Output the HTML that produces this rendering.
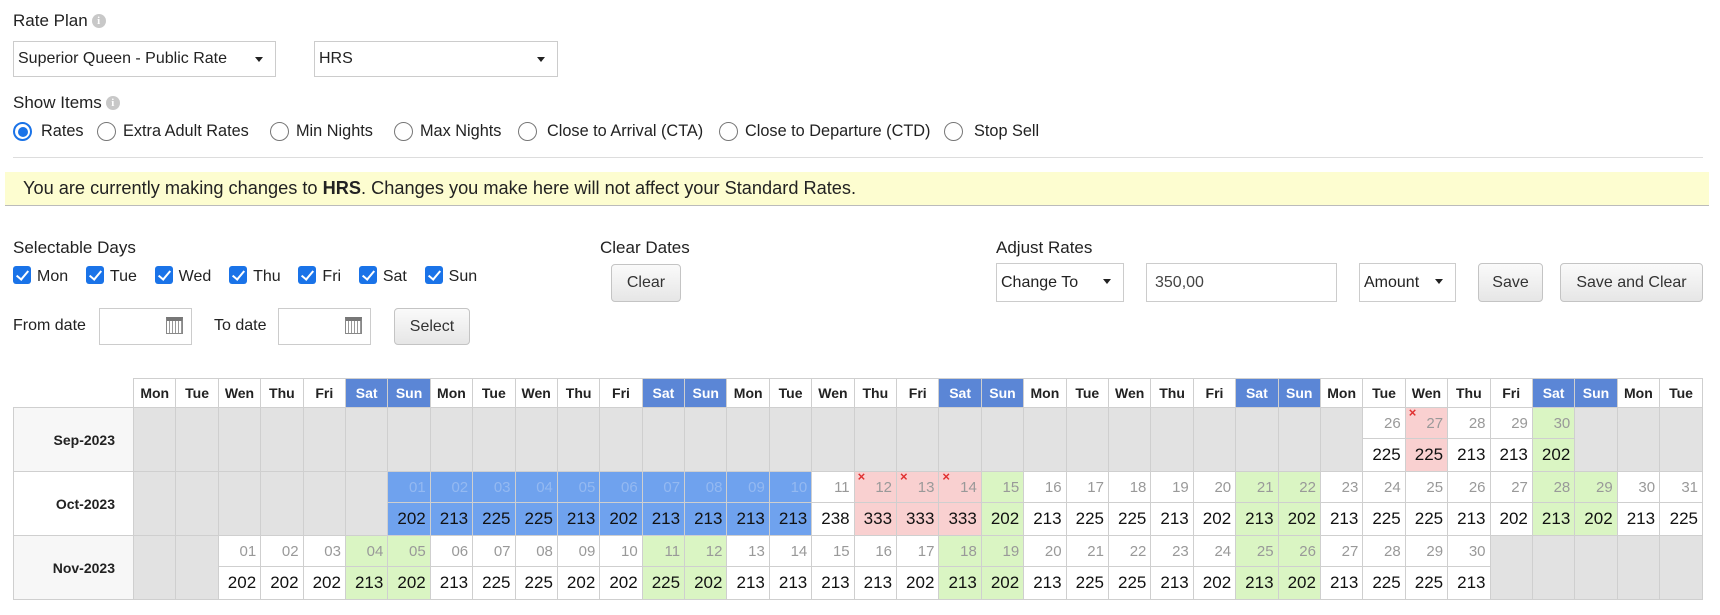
<!DOCTYPE html>
<html><head><meta charset="utf-8"><style>
*{box-sizing:border-box}
body{margin:0;width:1720px;height:615px;overflow:hidden;background:#fff;font-family:"Liberation Sans","DejaVu Sans",sans-serif;color:#222;font-size:17px;position:relative}
.a{position:absolute;white-space:nowrap}
.info{display:inline-block;width:14px;height:14px;border-radius:50%;background:#c8c8c8;color:#fff;font-size:11px;font-weight:bold;text-align:center;line-height:14px;font-family:"Liberation Serif",serif;vertical-align:2px;margin-left:4px}
.sel{position:absolute;border:1px solid #ccc;background:#fff;height:36px;line-height:34px;padding-left:4px;font-size:16px}
.sel:after{content:"";position:absolute;right:12px;top:15px;border-left:4px solid transparent;border-right:4px solid transparent;border-top:5px solid #222}
.radio{position:absolute;top:122px;width:19px;height:19px;border-radius:50%;border:1px solid #777;background:#fff}
.radio.on{border:2px solid #1a73e8}
.radio.on:after{content:"";position:absolute;left:2.5px;top:2.5px;width:10px;height:10px;border-radius:50%;background:#1a73e8}
.rl{position:absolute;top:122px;font-size:16.3px;white-space:nowrap}
.cb{display:inline-block;width:18px;height:18px;border-radius:3px;background:#1a73e8;vertical-align:-3px;margin-right:6px;position:relative}
.cb:after{content:"";position:absolute;left:6px;top:2px;width:5px;height:10px;border:solid #fff;border-width:0 2px 2px 0;transform:rotate(40deg)}
.btn{position:absolute;border:1px solid #c4c4c4;border-radius:4px;background:linear-gradient(#fafafa,#e6e6e6);text-align:center;font-size:16px;color:#333}
.inp{position:absolute;border:1px solid #ccc;background:#fff}
.cal{position:absolute;right:8px;top:8px;width:17px;height:17px;border:1px solid #888;border-top:4px solid #777;background:repeating-linear-gradient(90deg,#fff 0 2px,#999 2px 3px)}
table{position:absolute;left:13px;top:378px;border-collapse:collapse;table-layout:fixed;width:1690px}
td,th{border:1px solid #cfcfcf;padding:0 4px 0 0;text-align:right;overflow:hidden;white-space:nowrap}
th{height:29px;font-size:14px;font-weight:bold;text-align:center;padding:0;background:#fff}
th.w{background:#5b86d6;color:#fff}
th.c{border:none;border-right:1px solid #cfcfcf;border-bottom:1px solid #cfcfcf;background:#fff}
tr.d td.l{font-size:14px;font-weight:bold;padding-right:18px;background:#f7f7f7;color:#222}
tr.d td.l2{background:#fff}
td.e{background:#e2e2e2}
tr.d td{height:31px;font-size:15px;color:#999}
tr.r td{height:33px;font-size:17px;color:#111}
tr.d td.b{background:#6fa2ee;color:#94b9f1}
tr.r td.b{background:#6fa2ee}
td.g{background:#daf5c3}
td.p{background:#f9d0d0;position:relative}
.x{position:absolute;left:3px;top:-3px;color:#e03030;font-size:13px;font-weight:bold}
</style></head><body>
<div class="a" style="left:13px;top:11px">Rate Plan<span class="info">i</span></div>
<div class="sel" style="left:13px;top:41px;width:263px">Superior Queen - Public Rate</div>
<div class="sel" style="left:314px;top:41px;width:244px">HRS</div>
<div class="a" style="left:13px;top:93px">Show Items<span class="info">i</span></div>
<span class="radio on" style="left:13px"></span><span class="rl" style="left:41px">Rates</span>
<span class="radio" style="left:97px"></span><span class="rl" style="left:123px">Extra Adult Rates</span>
<span class="radio" style="left:270px"></span><span class="rl" style="left:296px">Min Nights</span>
<span class="radio" style="left:394px"></span><span class="rl" style="left:420px">Max Nights</span>
<span class="radio" style="left:518px"></span><span class="rl" style="left:547px">Close to Arrival (CTA)</span>
<span class="radio" style="left:719px"></span><span class="rl" style="left:745px">Close to Departure (CTD)</span>
<span class="radio" style="left:944px"></span><span class="rl" style="left:974px">Stop Sell</span>
<div class="a" style="left:13px;top:157px;width:1690px;height:1px;background:#ddd"></div>
<div class="a" style="left:5px;top:172px;width:1704px;height:34px;background:#fdfdd0;border-bottom:1px solid #bbb;padding:6px 0 0 18px;font-size:18.2px">You are currently making changes to <b>HRS</b>. Changes you make here will not affect your Standard Rates.</div>
<div class="a" style="left:13px;top:238px">Selectable Days</div>
<div class="a" style="left:13px;top:266px;font-size:16px"><span class="cb"></span>Mon&nbsp;&nbsp;&nbsp; <span class="cb"></span>Tue&nbsp;&nbsp;&nbsp; <span class="cb"></span>Wed&nbsp;&nbsp;&nbsp; <span class="cb"></span>Thu&nbsp;&nbsp;&nbsp; <span class="cb"></span>Fri&nbsp;&nbsp;&nbsp; <span class="cb"></span>Sat&nbsp;&nbsp;&nbsp; <span class="cb"></span>Sun</div>
<div class="a" style="left:13px;top:317px;font-size:16px">From date</div>
<div class="inp" style="left:99px;top:308px;width:93px;height:37px"><span class="cal"></span></div>
<div class="a" style="left:214px;top:317px;font-size:16px">To date</div>
<div class="inp" style="left:278px;top:308px;width:93px;height:37px"><span class="cal"></span></div>
<div class="btn" style="left:394px;top:308px;width:76px;height:37px;line-height:35px">Select</div>
<div class="a" style="left:600px;top:238px">Clear Dates</div>
<div class="btn" style="left:611px;top:264px;width:70px;height:38px;line-height:36px">Clear</div>
<div class="a" style="left:996px;top:238px">Adjust Rates</div>
<div class="sel" style="left:996px;top:263px;width:128px;height:39px;line-height:37px">Change To</div>
<div class="inp" style="left:1146px;top:263px;width:191px;height:39px;line-height:37px;padding-left:8px;font-size:16px;color:#444">350,00</div>
<div class="sel" style="left:1359px;top:263px;width:97px;height:39px;line-height:37px">Amount</div>
<div class="btn" style="left:1478px;top:263px;width:65px;height:39px;line-height:37px">Save</div>
<div class="btn" style="left:1560px;top:263px;width:143px;height:39px;line-height:37px">Save and Clear</div>
<table>
<colgroup><col style="width:120px"><col span="37"></colgroup>
<tr><th class="c"></th><th>Mon</th><th>Tue</th><th>Wen</th><th>Thu</th><th>Fri</th><th class="w">Sat</th><th class="w">Sun</th><th>Mon</th><th>Tue</th><th>Wen</th><th>Thu</th><th>Fri</th><th class="w">Sat</th><th class="w">Sun</th><th>Mon</th><th>Tue</th><th>Wen</th><th>Thu</th><th>Fri</th><th class="w">Sat</th><th class="w">Sun</th><th>Mon</th><th>Tue</th><th>Wen</th><th>Thu</th><th>Fri</th><th class="w">Sat</th><th class="w">Sun</th><th>Mon</th><th>Tue</th><th>Wen</th><th>Thu</th><th>Fri</th><th class="w">Sat</th><th class="w">Sun</th><th>Mon</th><th>Tue</th></tr>
<tr class="d"><td class="l" rowspan="2">Sep-2023</td><td class="e" rowspan="2"></td><td class="e" rowspan="2"></td><td class="e" rowspan="2"></td><td class="e" rowspan="2"></td><td class="e" rowspan="2"></td><td class="e" rowspan="2"></td><td class="e" rowspan="2"></td><td class="e" rowspan="2"></td><td class="e" rowspan="2"></td><td class="e" rowspan="2"></td><td class="e" rowspan="2"></td><td class="e" rowspan="2"></td><td class="e" rowspan="2"></td><td class="e" rowspan="2"></td><td class="e" rowspan="2"></td><td class="e" rowspan="2"></td><td class="e" rowspan="2"></td><td class="e" rowspan="2"></td><td class="e" rowspan="2"></td><td class="e" rowspan="2"></td><td class="e" rowspan="2"></td><td class="e" rowspan="2"></td><td class="e" rowspan="2"></td><td class="e" rowspan="2"></td><td class="e" rowspan="2"></td><td class="e" rowspan="2"></td><td class="e" rowspan="2"></td><td class="e" rowspan="2"></td><td class="e" rowspan="2"></td><td>26</td><td class="p"><span class="x">×</span>27</td><td>28</td><td>29</td><td class="g">30</td><td class="e" rowspan="2"></td><td class="e" rowspan="2"></td><td class="e" rowspan="2"></td></tr>
<tr class="r"><td>225</td><td class="p">225</td><td>213</td><td>213</td><td class="g">202</td></tr>
<tr class="d"><td class="l l2" rowspan="2">Oct-2023</td><td class="e" rowspan="2"></td><td class="e" rowspan="2"></td><td class="e" rowspan="2"></td><td class="e" rowspan="2"></td><td class="e" rowspan="2"></td><td class="e" rowspan="2"></td><td class="b">01</td><td class="b">02</td><td class="b">03</td><td class="b">04</td><td class="b">05</td><td class="b">06</td><td class="b">07</td><td class="b">08</td><td class="b">09</td><td class="b">10</td><td>11</td><td class="p"><span class="x">×</span>12</td><td class="p"><span class="x">×</span>13</td><td class="p"><span class="x">×</span>14</td><td class="g">15</td><td>16</td><td>17</td><td>18</td><td>19</td><td>20</td><td class="g">21</td><td class="g">22</td><td>23</td><td>24</td><td>25</td><td>26</td><td>27</td><td class="g">28</td><td class="g">29</td><td>30</td><td>31</td></tr>
<tr class="r"><td class="b">202</td><td class="b">213</td><td class="b">225</td><td class="b">225</td><td class="b">213</td><td class="b">202</td><td class="b">213</td><td class="b">213</td><td class="b">213</td><td class="b">213</td><td>238</td><td class="p">333</td><td class="p">333</td><td class="p">333</td><td class="g">202</td><td>213</td><td>225</td><td>225</td><td>213</td><td>202</td><td class="g">213</td><td class="g">202</td><td>213</td><td>225</td><td>225</td><td>213</td><td>202</td><td class="g">213</td><td class="g">202</td><td>213</td><td>225</td></tr>
<tr class="d"><td class="l" rowspan="2">Nov-2023</td><td class="e" rowspan="2"></td><td class="e" rowspan="2"></td><td>01</td><td>02</td><td>03</td><td class="g">04</td><td class="g">05</td><td>06</td><td>07</td><td>08</td><td>09</td><td>10</td><td class="g">11</td><td class="g">12</td><td>13</td><td>14</td><td>15</td><td>16</td><td>17</td><td class="g">18</td><td class="g">19</td><td>20</td><td>21</td><td>22</td><td>23</td><td>24</td><td class="g">25</td><td class="g">26</td><td>27</td><td>28</td><td>29</td><td>30</td><td class="e" rowspan="2"></td><td class="e" rowspan="2"></td><td class="e" rowspan="2"></td><td class="e" rowspan="2"></td><td class="e" rowspan="2"></td></tr>
<tr class="r"><td>202</td><td>202</td><td>202</td><td class="g">213</td><td class="g">202</td><td>213</td><td>225</td><td>225</td><td>202</td><td>202</td><td class="g">225</td><td class="g">202</td><td>213</td><td>213</td><td>213</td><td>213</td><td>202</td><td class="g">213</td><td class="g">202</td><td>213</td><td>225</td><td>225</td><td>213</td><td>202</td><td class="g">213</td><td class="g">202</td><td>213</td><td>225</td><td>225</td><td>213</td></tr>
</table>
</body></html>
